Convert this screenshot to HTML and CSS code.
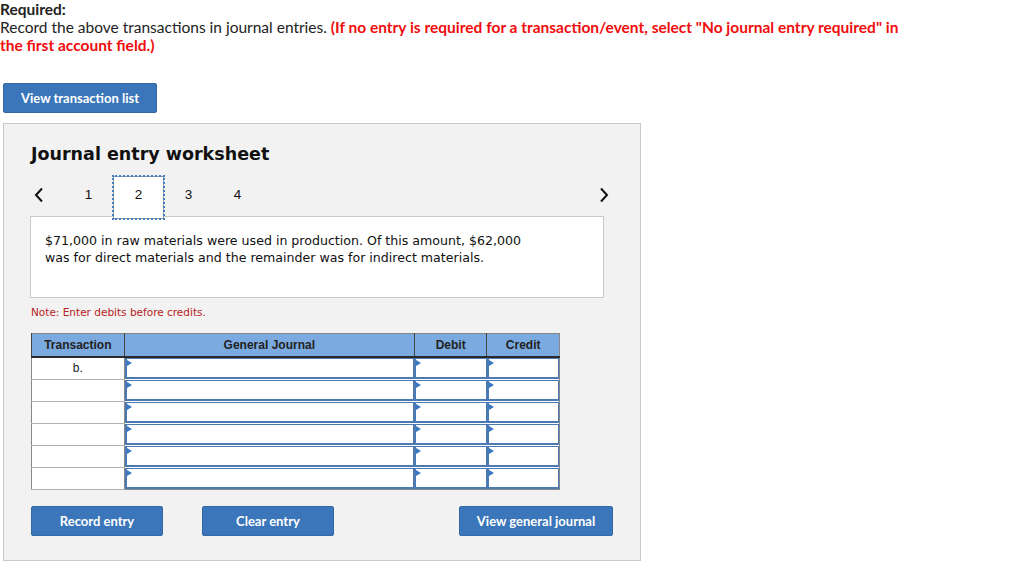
FILE: index.html
```html
<!DOCTYPE html>
<html lang="en">
<head>
    <meta charset="UTF-8">
    <title>Journal entry worksheet</title>
    <link rel="stylesheet" href="styles.css">
</head>
<body>
    <!-- Instructions -->
    <div class="required">
        <strong>Required:</strong><br>
        Record the above transactions in journal entries. <span class="warn">(If no entry is required for a transaction/event, select "No journal entry required" in the first account field.)</span>
    </div>

    <div class="page">
        <button class="btn btn-list">View transaction list</button>

        <div class="worksheet">
            <h2 class="ws-title">Journal entry worksheet</h2>

            <!-- Step navigation -->
            <div class="steps">
                <span class="arrow prev">
                    <svg width="10" height="16" viewBox="0 0 10 16"><path d="M8 1.5 L2 8 L8 14.5" fill="none" stroke="#111" stroke-width="2"/></svg>
                </span>
                <span class="step">1</span>
                <span class="step current">2</span>
                <span class="step">3</span>
                <span class="step">4</span>
                <span class="arrow next">
                    <svg width="10" height="16" viewBox="0 0 10 16"><path d="M2 1.5 L8 8 L2 14.5" fill="none" stroke="#111" stroke-width="2"/></svg>
                </span>
            </div>

            <div class="event">
                $71,000 in raw materials were used in production. Of this amount, $62,000<br>
                was for direct materials and the remainder was for indirect materials.
            </div>

            <p class="note">Note: Enter debits before credits.</p>

            <table class="journal">
                <thead>
                    <tr>
                        <th class="c-trans">Transaction</th>
                        <th class="c-acct">General Journal</th>
                        <th class="c-amt">Debit</th>
                        <th class="c-amt">Credit</th>
                    </tr>
                </thead>
                <tbody>
                    <tr>
                        <td class="trans">b.</td>
                        <td class="inp"><div class="field"></div></td>
                        <td class="inp"><div class="field"></div></td>
                        <td class="inp"><div class="field"></div></td>
                    </tr>
                    <tr>
                        <td class="trans"></td>
                        <td class="inp"><div class="field"></div></td>
                        <td class="inp"><div class="field"></div></td>
                        <td class="inp"><div class="field"></div></td>
                    </tr>
                    <tr>
                        <td class="trans"></td>
                        <td class="inp"><div class="field"></div></td>
                        <td class="inp"><div class="field"></div></td>
                        <td class="inp"><div class="field"></div></td>
                    </tr>
                    <tr>
                        <td class="trans"></td>
                        <td class="inp"><div class="field"></div></td>
                        <td class="inp"><div class="field"></div></td>
                        <td class="inp"><div class="field"></div></td>
                    </tr>
                    <tr>
                        <td class="trans"></td>
                        <td class="inp"><div class="field"></div></td>
                        <td class="inp"><div class="field"></div></td>
                        <td class="inp"><div class="field"></div></td>
                    </tr>
                    <tr>
                        <td class="trans"></td>
                        <td class="inp"><div class="field"></div></td>
                        <td class="inp"><div class="field"></div></td>
                        <td class="inp"><div class="field"></div></td>
                    </tr>
                </tbody>
            </table>

            <div class="actions">
                <button class="btn btn-record">Record entry</button>
                <button class="btn btn-clear">Clear entry</button>
                <button class="btn btn-view">View general journal</button>
            </div>
        </div>
    </div>
</body>
</html>
```

FILE: styles.css
```css
body {
    margin: 0;
    font-family: Lato, "Open Sans", sans-serif;
    color: #222;
    background: #fff;
}
.required {
    font-size: 15.5px;
    line-height: 18px;
    max-width: 912px;
}
.required strong {
    font-weight: bold;
}
.warn {
    color: #f00d0d;
    font-weight: bold;
}
.page {
    padding: 29px 0 0 3px;
}
.btn {
    background-color: #3a76b9;
    color: #fff;
    border: 1px solid #3469a6;
    border-radius: 2px;
    font-family: Lato, sans-serif;
    font-weight: bold;
    font-size: 13px;
    height: 30px;
    padding: 0;
    cursor: pointer;
}
.btn-list {
    width: 154px;
    display: block;
}
.worksheet {
    margin-top: 10px;
    height: 436px;
    background-color: #f2f2f2;
    border: 1px solid #c9c9c9;
    padding: 0 27px;
    width: 582px;
}
.ws-title {
    font-family: "DejaVu Sans", sans-serif;
    font-size: 17.5px;
    font-weight: bold;
    color: #111;
    margin: 20px 0 0 0;
    line-height: 20px;
}
.steps {
    display: flex;
    align-items: center;
    height: 43px;
    margin-top: 12px;
    font-family: "Liberation Sans", Arial, sans-serif;
    font-size: 13.5px;
    color: #111;
    position: relative;
    z-index: 1;
}
.arrow {
    display: flex;
    align-items: center;
    padding-bottom: 6px;
}
.prev {
    width: 30px;
    padding-left: 3px;
}
.next {
    margin-left: auto;
    margin-right: 4px;
}
.step {
    width: 49px;
    text-align: center;
    padding-bottom: 6px;
}
.step.current {
    width: 51px;
    height: 43px;
    line-height: 36px;
    padding-bottom: 0;
    box-sizing: border-box;
    background: #fff;
    border: 1px solid #999;
    outline: 2px dotted #3f7fc6;
    outline-offset: -1px;
}
.event {
    margin: -3px 0 0 -1px;
    width: 574px;
    height: 82px;
    box-sizing: border-box;
    background: #fff;
    border: 1px solid #c9c9c9;
    padding: 15px 14px;
    font-family: "DejaVu Sans", Verdana, sans-serif;
    font-size: 12.6px;
    line-height: 17px;
    color: #111;
}
.note {
    font-family: "DejaVu Sans", Verdana, sans-serif;
    font-size: 10.5px;
    color: #b71c1c;
    margin: 7px 0 0 0;
    line-height: 14px;
}
.journal {
    margin-top: 14px;
    border-collapse: collapse;
    width: 529px;
    font-family: "Liberation Sans", Arial, sans-serif;
    font-size: 12px;
    border: 1px solid #888;
}
.journal th {
    background-color: #7aaadf;
    font-weight: bold;
    color: #222;
    height: 22px;
    padding: 0;
    border-left: 1px solid #444;
    border-bottom: 2px solid #2a2a2a;
}
.c-trans { width: 92px; }
.c-acct { width: 292px; }
.c-amt { width: 72px; }
.journal td {
    padding: 0;
    height: 21px;
}
.trans {
    background: #fff;
    text-align: center;
    color: #222;
    border-bottom: 1px solid #b0b0b0;
    border-right: 1px solid #888;
    vertical-align: top;
    line-height: 20px;
}
.inp {
    background: #fff;
}
.field {
    position: relative;
    height: 18px;
    border-left: 2px solid #4a79b3;
    border-top: 1px solid #4a79b3;
    border-bottom: 2px solid #4a79b3;
    border-right: 1px solid #4a79b3;
}
.field::before {
    content: "";
    position: absolute;
    left: 0;
    top: 1px;
    border-left: 5px solid #3a78c2;
    border-top: 3.5px solid transparent;
    border-bottom: 3.5px solid transparent;
}
.actions {
    display: flex;
    margin-top: 16px;
}
.btn-record {
    width: 132px;
}
.btn-clear {
    width: 132px;
    margin-left: 39px;
}
.btn-view {
    width: 154px;
    margin-left: 125px;
}
```
